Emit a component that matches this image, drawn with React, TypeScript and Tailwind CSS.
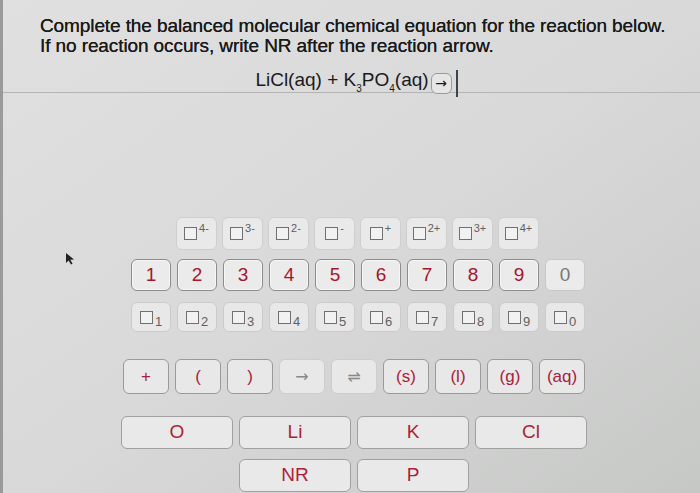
import React from 'react';

const charges = ['4-', '3-', '2-', '-', '+', '2+', '3+', '4+'];
const digits = ['1', '2', '3', '4', '5', '6', '7', '8', '9', '0'];
const subs = ['1', '2', '3', '4', '5', '6', '7', '8', '9', '0'];
const symbols = [
  { label: '+', red: true },
  { label: '(', red: true },
  { label: ')', red: true },
  { label: '→', red: false },
  { label: '⇌', red: false },
  { label: '(s)', red: true },
  { label: '(l)', red: true },
  { label: '(g)', red: true },
  { label: '(aq)', red: true },
];

function Box() {
  return <span className="inline-block h-[13px] w-[13px] border border-[#707070] bg-[#f2f2f2]" />;
}

export default function App() {
  return (
    <div
      className="relative h-[493px] w-[700px] overflow-hidden border-l-[3px] border-[#9a9a9a] bg-gradient-to-br from-[#e0e0e0] via-[#d9d9d9] to-[#c6c8c6] text-[#1a1a1a]"
      style={{ fontFamily: '"Liberation Sans", Arial, sans-serif' }}
    >
      {/* Prompt */}
      <div className="pl-[37px] pt-[16px] text-[19px] leading-[20px] tracking-[-0.1px] [text-shadow:0_0_0.4px_#1a1a1a]">
        <p>Complete the balanced molecular chemical equation for the reaction below.</p>
        <p>If no reaction occurs, write NR after the reaction arrow.</p>
      </div>

      {/* Equation */}
      <div className="border-b border-[#b4b4b4]">
        <div className="flex h-[36px] items-center justify-center pl-[10px] pt-[12px] text-[19px] leading-[24px]">
          <span>
            LiCl(aq) + K<span className="relative top-[6px] text-[10px] leading-none">3</span>PO
            <span className="relative top-[6px] text-[10px] leading-none">4</span>(aq)
          </span>
          <span className="relative top-[3px] ml-[2px] flex h-[21px] w-[21px] items-center justify-center rounded-md border border-[#9a9a9a] bg-[#e6e6e6] font-['DejaVu_Sans',sans-serif] text-[14px] leading-none">
            →
          </span>
          <span className="relative top-[3px] ml-[4px] h-[27px] w-[2px] bg-[#3b4250]" />
        </div>
      </div>

      {/* Keypad */}
      <div className="pt-[124px] text-[#5f5f5f]">
        <div className="ml-[173px] flex gap-[5px]">
          {charges.map((c) => (
            <div
              key={c}
              className="flex h-[33px] w-[41px] items-center justify-center rounded-md border border-[#cfcfcf] bg-[#e9e9e9]"
            >
              <Box />
              <span className="relative -top-[5px] ml-[2px] text-[11px]">{c}</span>
            </div>
          ))}
        </div>

        <div className="ml-[128px] mt-[9px] flex gap-[6px]">
          {digits.map((d) => (
            <div
              key={d}
              className={`flex h-[32px] w-[40px] items-center justify-center rounded-md border bg-[#ebebeb] text-[19px] ${
                d === '0'
                  ? 'border-[#c8c8c8] text-[#777]'
                  : 'border-[#8c8c8c] text-[#a2172c] shadow-[inset_0_0_0_1px_#f6f6f6]'
              }`}
            >
              {d}
            </div>
          ))}
        </div>

        <div className="ml-[128px] mt-[11px] flex gap-[6px]">
          {subs.map((s) => (
            <div
              key={s}
              className="flex h-[30px] w-[40px] items-center justify-center rounded-md border border-[#cbcbcb] bg-[#e8e8e8]"
            >
              <Box />
              <span className="relative top-[5px] ml-[2px] text-[13px]">{s}</span>
            </div>
          ))}
        </div>

        <div className="ml-[120px] mt-[27px] flex gap-[6px]">
          {symbols.map((s) => (
            <div
              key={s.label}
              className={`flex h-[35px] w-[46px] items-center justify-center rounded-md border bg-[#e8e8e8] ${
                s.red
                  ? 'border-[#9a9a9a] text-[17px] text-[#a8203a]'
                  : "border-[#cdcdcd] font-['DejaVu_Sans',sans-serif] text-[16px] text-[#888]"
              }`}
            >
              {s.label}
            </div>
          ))}
        </div>

        <div className="ml-[118px] mt-[22px] grid w-[466px] grid-cols-4 gap-x-[6px] gap-y-[10px] text-[19px] text-[#ab1f3a]">
          {['O', 'Li', 'K', 'Cl'].map((e) => (
            <div
              key={e}
              className="flex h-[33px] items-center justify-center rounded-md border border-[#a0a0a0] bg-[#e9e9e9]"
            >
              {e}
            </div>
          ))}
          <div />
          {['NR', 'P'].map((e) => (
            <div
              key={e}
              className="flex h-[33px] items-center justify-center rounded-md border border-[#a0a0a0] bg-[#e9e9e9]"
            >
              {e}
            </div>
          ))}
        </div>
      </div>

      {/* mouse pointer */}
      <svg className="absolute left-[62px] top-[252px]" width="11" height="13" viewBox="0 0 11 13">
        <path d="M1 1 L1 11 L3.6 8.4 L6 12.5 L7.6 11.7 L5.3 7.7 L9 7.5 Z" fill="#222" />
      </svg>
    </div>
  );
}
